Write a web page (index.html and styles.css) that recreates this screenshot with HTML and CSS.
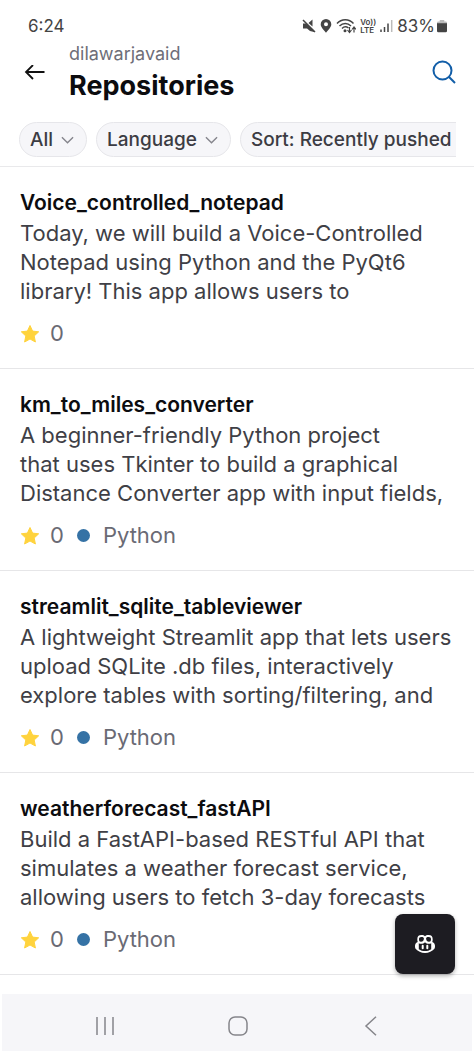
FILE: index.html
```html
<!DOCTYPE html>
<html lang="en">
<head>
<meta charset="utf-8">
<meta name="viewport" content="width=device-width, initial-scale=1">
<title>Repositories</title>
<link rel="stylesheet" href="styles.css">
</head>
<body>
<div class="status">
  <span class="clock">6:24</span>
  <div class="status-icons">
    <svg width="14" height="14" viewBox="0 0 14 14"><path d="M1 4.500h3L12 11.500v1.500L8 12 5 9.500H1zM6.500 4 10.500 .5v7z" fill="#444"/><path d="M1 1l12 12" stroke="#444" stroke-width="1.500"/></svg>
    <svg width="12" height="14" viewBox="0 0 12 14"><path fill-rule="evenodd" d="M6 0a5.300 5.300 0 0 1 5.300 5.300C11.300 8.500 8 11 6 13.800 4 11 .7 8.500.7 5.300A5.300 5.300 0 0 1 6 0zm0 3.200a2 2 0 1 0 0 4 2 2 0 0 0 0-4z" fill="#444"/></svg>
    <svg width="20" height="16" viewBox="0 0 20 16"><g fill="none" stroke="#444" stroke-width="1.500"><path d="M1 5.500c4.500-5 12-5 16.500 0M3.500 8c3.500-3.500 8-3.500 11.500 0M6 10.500c2-2 4.500-2 6.500-.5"/><path d="M13.500 9v5M11.500 12l2 2.500 2-2.500M18 14.500v-5M16 11.500l2-2.500 2 2.500" stroke-width="1.200"/></g><circle cx="9" cy="12.800" r="1.500" fill="#444"/></svg>
    <span class="volte">Vo))<br>LTE</span>
    <svg width="13" height="14" viewBox="0 0 13 14"><path d="M1 10.500V13M4.500 8v5M8 4.500V13" stroke="#444" stroke-width="1.500"/><path d="M11.700 1v12" stroke="#bbb" stroke-width="1.500"/></svg>
    <span class="percent">83%</span>
    <svg width="10" height="14" viewBox="0 0 11 14"><path d="M3 .5h5V2h1.500A1.500 1.500 0 0 1 11 3.500V5H0V3.500A1.500 1.500 0 0 1 1.500 2H3z" fill="#bbb"/><path d="M0 4h11v8.500a1.500 1.500 0 0 1-1.500 1.500h-8A1.500 1.500 0 0 1 0 12.500z" fill="#444"/></svg>
  </div>
</div>
<header class="header">
  <button class="icon-btn" aria-label="Back"><svg width="22" height="18" viewBox="0 0 22 18"><path d="M20.500 7H2M9 0 2 7l7 7" fill="none" stroke="#111" stroke-width="1.800"/></svg></button>
  <div class="heading">
    <div class="owner">dilawarjavaid</div>
    <h1>Repositories</h1>
  </div>
  <button class="icon-btn" aria-label="Search"><svg width="24" height="28" viewBox="0 0 24 28"><g fill="none" stroke="#125ea8" stroke-width="2"><circle cx="10.500" cy="10.500" r="9"/><path d="M16.800 16.800 23 23"/></g></svg></button>
</header>
<nav class="filters" aria-label="Filters">
  <div class="chips">
    <button class="chip">All <svg width="13" height="8" viewBox="0 0 14 8"><path d="M1 1l6 6 6-6" fill="none" stroke="#85858c" stroke-width="1.500"/></svg></button>
    <button class="chip">Language <svg width="13" height="8" viewBox="0 0 14 8"><path d="M1 1l6 6 6-6" fill="none" stroke="#85858c" stroke-width="1.500"/></svg></button>
    <button class="chip">Sort: Recently pushed <svg width="13" height="8" viewBox="0 0 14 8"><path d="M1 1l6 6 6-6" fill="none" stroke="#85858c" stroke-width="1.500"/></svg></button>
  </div>
</nav>
<main class="list">
  <article class="repo">
    <h2>Voice_controlled_notepad</h2>
    <p>Today, we will build a Voice-Controlled<br>Notepad using Python and the PyQt6<br>library! This app allows users to</p>
    <div class="meta"><svg class="star" width="20" height="20" viewBox="0 0 20 20"><path d="M10 1.500l2.600 5.600 6.100.7-4.500 4.200 1.200 6L10 15l-5.400 3 1.200-6L1.300 7.800l6.100-.7z" fill="#ffd33d" stroke="#ffd33d" stroke-linejoin="round"/></svg><span>0</span></div>
  </article>
  <article class="repo">
    <h2>km_to_miles_converter</h2>
    <p>A beginner-friendly Python project<br>that uses Tkinter to build a graphical<br>Distance Converter app with input fields,</p>
    <div class="meta"><svg class="star" width="20" height="20" viewBox="0 0 20 20"><path d="M10 1.500l2.600 5.600 6.100.7-4.500 4.200 1.200 6L10 15l-5.400 3 1.200-6L1.300 7.800l6.100-.7z" fill="#ffd33d" stroke="#ffd33d" stroke-linejoin="round"/></svg><span>0</span><i class="dot"></i><span>Python</span></div>
  </article>
  <article class="repo">
    <h2>streamlit_sqlite_tableviewer</h2>
    <p>A lightweight Streamlit app that lets users<br>upload SQLite .db files, interactively<br>explore tables with sorting/filtering, and</p>
    <div class="meta"><svg class="star" width="20" height="20" viewBox="0 0 20 20"><path d="M10 1.500l2.600 5.600 6.100.7-4.500 4.200 1.200 6L10 15l-5.400 3 1.200-6L1.300 7.800l6.100-.7z" fill="#ffd33d" stroke="#ffd33d" stroke-linejoin="round"/></svg><span>0</span><i class="dot"></i><span>Python</span></div>
  </article>
  <article class="repo">
    <h2>weatherforecast_fastAPI</h2>
    <p>Build a FastAPI-based RESTful API that<br>simulates a weather forecast service,<br>allowing users to fetch 3-day forecasts</p>
    <div class="meta"><svg class="star" width="20" height="20" viewBox="0 0 20 20"><path d="M10 1.500l2.600 5.600 6.100.7-4.500 4.200 1.200 6L10 15l-5.400 3 1.200-6L1.300 7.800l6.100-.7z" fill="#ffd33d" stroke="#ffd33d" stroke-linejoin="round"/></svg><span>0</span><i class="dot"></i><span>Python</span></div>
  </article>
</main>
<button class="fab" aria-label="Copilot"><svg width="20" height="18" viewBox="0 0 20 18"><path fill-rule="evenodd" fill="#fff" d="M6.500 0C8 0 9.300.4 10 1.200 10.700.4 12 0 13.500 0c3 0 4.200 1.500 4.200 4.200 0 1-.1 2-.4 2.800C19.500 8 20 9.500 20 11c0 1.500-.2 2.300-.8 3-2 2.300-5.400 4-9.200 4s-7.200-1.700-9.200-4C.2 13.300 0 12.500 0 11c0-1.500.5-3 2.700-4-.3-.8-.4-1.800-.4-2.800C2.300 1.500 3.500 0 6.500 0zM6.400 1.900C4.600 1.900 4 2.600 4 4.300 4 6 4.500 6.800 6 6.800c1.800 0 2.700-1 2.900-3C9 2.400 8.300 1.900 6.400 1.900zm7.200 0c-1.900 0-2.600.5-2.500 1.900.2 2 1.100 3 2.900 3 1.500 0 2-.8 2-2.500 0-1.700-.6-2.400-2.400-2.400zM10 7.300C9 8.400 7.700 8.800 6 8.800c-.9 0-1.600-.1-2.200-.5v5.900c1.800 1.200 3.900 1.900 6.200 1.900s4.400-.7 6.200-1.900V8.300c-.6.4-1.300.5-2.200.5-1.700 0-3-.4-4-1.500z"/><path d="M7.700 10.800v2.400M12.300 10.800v2.400" stroke="#fff" stroke-width="2" stroke-linecap="round"/></svg></button>
<nav class="sysbar" aria-label="System navigation">
  <button class="icon-btn" aria-label="Recents"><svg width="20" height="20" viewBox="0 0 20 20"><path d="M2 1v18M10 1v18M18 1v18" stroke="#85858a" stroke-width="1.500"/></svg></button>
  <button class="icon-btn" aria-label="Home"><svg width="20" height="20" viewBox="0 0 20 20"><rect x="1" y="1" width="18" height="18" rx="6" fill="none" stroke="#85858a" stroke-width="1.500"/></svg></button>
  <button class="icon-btn" aria-label="Back to previous app"><svg width="20" height="20" viewBox="0 0 20 20"><path d="M15 .8 5 10l10 9.200" fill="none" stroke="#85858a" stroke-width="1.500"/></svg></button>
</nav>
</body>
</html>
```
FILE: styles.css
```css
* { box-sizing: border-box; }
body {
  margin: 0;
  min-height: 100vh;
  display: flex;
  flex-direction: column;
  background: #fff;
  color: #0c0c0f;
  font-family: Inter, "Liberation Sans", sans-serif;
}
button { font: inherit; cursor: pointer; }
svg { display: block; flex: none; }
h1, h2, p { margin: 0; }

.status {
  display: flex;
  justify-content: space-between;
  align-items: center;
  height: 42px;
  padding: 10px 27px 0 28px;
  color: #444;
  font-size: 17px;
}
.status-icons { display: flex; align-items: center; gap: 4px; }
.volte { font-size: 8px; line-height: 8px; font-weight: 600; }
.percent { margin-right: -2px; }

.header {
  display: flex;
  align-items: center;
  padding: 0 18px 0 24px;
}
.icon-btn {
  display: flex;
  align-items: center;
  justify-content: center;
  padding: 0;
  border: 0;
  background: none;
}
.heading { flex: 1; padding-left: 23px; }
.owner { font-size: 18px; line-height: 24px; color: #6e6e78; }
h1 { font-size: 27px; line-height: 40px; font-weight: 700; }

.filters {
  padding: 16px 18px 9px 19px;
  border-bottom: 1px solid #e9e9eb;
}
.chips { display: flex; gap: 9px; overflow: hidden; }
.chip {
  display: flex;
  flex: none;
  align-items: center;
  gap: 8px;
  height: 35px;
  padding: 0 12px 0 10px;
  border: 1px solid #e6e6ea;
  border-radius: 18px;
  background: #f6f6f9;
  color: #3c3c43;
  font-size: 19px;
  font-weight: 500;
}

.repo {
  padding: 20px 20px 19px;
  border-bottom: 1px solid #e6e6e8;
}
.repo h2 { font-size: 21px; line-height: 32px; font-weight: 600; }
.repo p {
  font-size: 22px;
  line-height: 29px;
  color: #3f3f46;
  white-space: nowrap;
}
.meta {
  display: flex;
  align-items: center;
  margin-top: 12px;
  gap: 13px;
  font-size: 22px;
  line-height: 31px;
  color: #6a6a74;
}
.star { margin-right: -3px; }
.dot { width: 13px; height: 13px; border-radius: 50%; background: #3572a5; }

.fab {
  position: fixed;
  right: 19px;
  bottom: 79px;
  width: 60px;
  height: 60px;
  display: flex;
  align-items: center;
  justify-content: center;
  border: 0;
  border-radius: 8px;
  background: #1d1c22;
  box-shadow: 0 2px 4px rgba(0, 0, 0, .3);
}
.sysbar {
  display: flex;
  justify-content: space-between;
  margin: auto 2px 2px;
  padding: 22px 91px 15px 93px;
  background: #f6f6f9;
}
```
